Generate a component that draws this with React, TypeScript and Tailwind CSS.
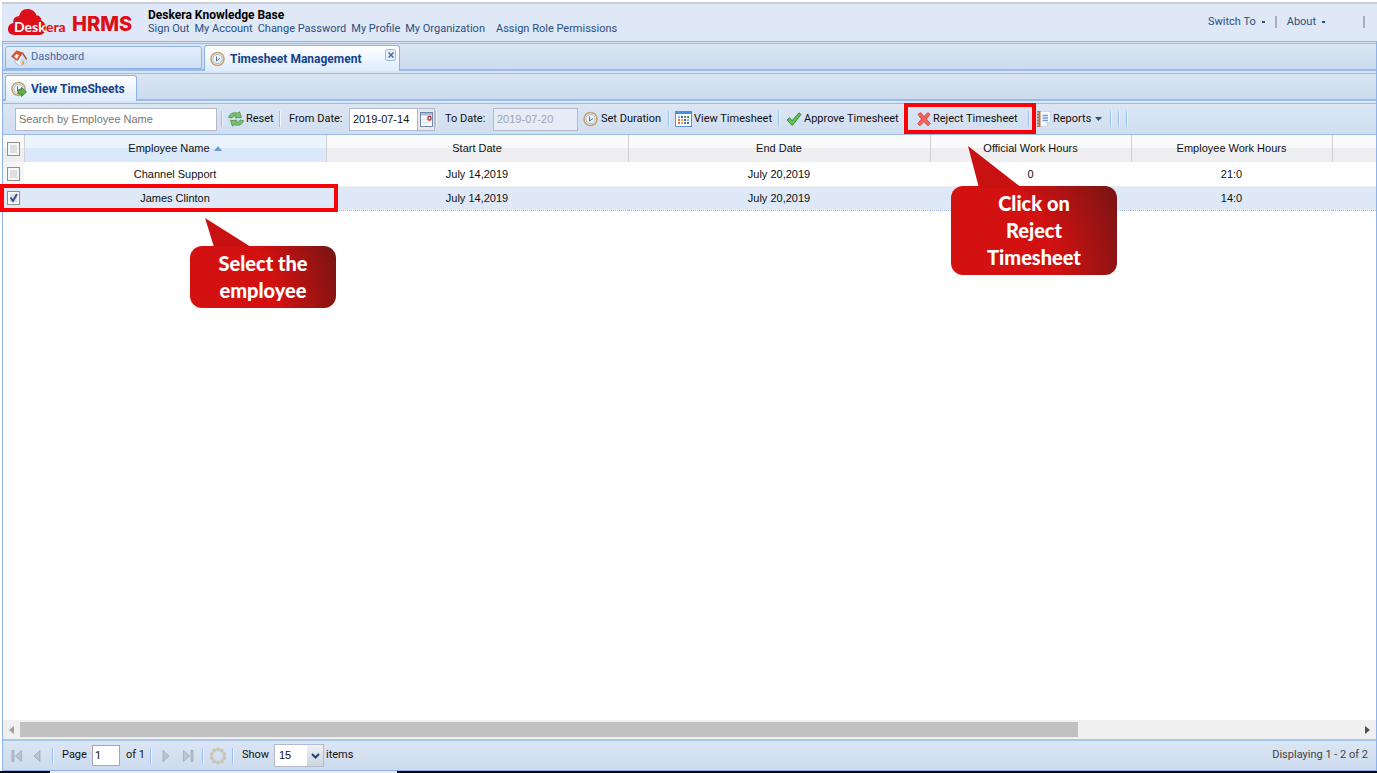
import React, { useState } from "react";

const columns = ["Start Date", "End Date", "Official Work Hours", "Employee Work Hours"];

const timesheets = [
  { name: "Channel Support", start: "July 14,2019", end: "July 20,2019", official: "0", worked: "21:0" },
  { name: "James Clinton", start: "July 14,2019", end: "July 20,2019", official: "", worked: "14:0" },
];

const Logo = () => (
  <svg width="126" height="28" viewBox="0 0 126 28" className="block shrink-0" role="img" aria-label="Deskera HRMS">
    <path
      d="M6.5 27C2.500 27 0 24.700 0 21.300C0 18 2.200 15.300 5.300 15C4.800 11 7.300 8.300 11 8.300C12.200 3.800 15 1 19 1C24 1 27.300 3.500 28.600 7.600C31.500 7.600 33.300 9.700 33.300 12.600C36 13.800 37.800 16.500 37.800 19.500C37.800 24 35 27 31.500 27Z"
      fill="#dc0f18"
    />
    <text x="6" y="24" fontFamily="Lato, sans-serif" fontWeight="700" fontSize="14" fill="#fff">
      Desk
    </text>
    <text x="38" y="24" fontFamily="Lato, sans-serif" fontWeight="700" fontSize="14" fill="#dc0f18">
      era
    </text>
    <text x="64" y="23" fontFamily="Inter, sans-serif" fontWeight="800" fontSize="20" fill="#dc0f18">
      HRMS
    </text>
  </svg>
);

const HomeIcon = () => (
  <svg width="16" height="16" viewBox="0 0 16 16" className="shrink-0">
    <path d="M4 8L10.500 5L15 9.500V13L9 16L4 12.500Z" fill="#f4f7fc" stroke="#8fa3c0" strokeWidth=".7" />
    <path d="M9 10V16L15 13V9.500L11.500 6Z" fill="#cfdcee" />
    <path d="M11 11.500L13 10.500V14L11 15Z" fill="#e9a93c" />
    <path d="M.5 6.500L5.500 .8L11.500 2.800L6.500 10.500Z" fill="#e0562a" stroke="#a53b1c" strokeWidth=".6" />
    <path d="M11.500 2.800L15.700 9.300" stroke="#a53b1c" strokeWidth="1.200" />
    <path d="M3 6.500L5.500 4L8 5L6 9Z" fill="#fbe9de" />
  </svg>
);

const ClockIcon = ({ go = false }: { go?: boolean }) => (
  <svg width="16" height="16" viewBox="0 0 16 16" className="shrink-0">
    <circle cx="7.500" cy="8" r="6.500" fill="#fff" stroke="#c9a36b" strokeWidth="1.600" />
    <circle cx="7.500" cy="8" r="4.700" fill="#eef5fc" stroke="#9fb6d4" strokeWidth="1" />
    <path d="M6.500 5.500V10L10 7.500" fill="none" stroke="#5d6f88" strokeWidth="1" />
    {go && <path d="M7 9H10.500V6.500L15.500 11L10.500 15.500V13H7Z" fill="#62b245" stroke="#34752a" strokeWidth=".8" />}
  </svg>
);

const ResetIcon = () => (
  <svg width="16" height="16" viewBox="0 0 16 16" className="shrink-0">
    <path
      d="M.6 6.500C1.500 2.500 5.500 .8 9.500 2.200L11.500 .8L13.500 6.500L7 6.800L8.500 5.200C6.500 4.500 4.800 5 4 7Z"
      fill="#7cc070"
      stroke="#3c8a3c"
      strokeWidth=".7"
    />
    <path
      d="M15.500 9.500C14.500 13.500 10.500 15.200 6.500 13.800L4.500 15.200L2.500 9.500L9 9.200L7.500 10.800C9.500 11.500 11.200 11 12 9Z"
      fill="#7cc070"
      stroke="#3c8a3c"
      strokeWidth=".7"
    />
  </svg>
);

const GridIcon = () => (
  <svg width="17" height="16" viewBox="0 0 17 16" className="shrink-0">
    <rect x=".5" y=".5" width="16" height="15" fill="#fff" stroke="#5b93da" />
    <rect x="0" y="0" width="17" height="3" fill="#4b8de0" />
    <path d="M3 5h2v2H3zM12 8h2v2h-2z" fill="#7fb4ec" />
    <path d="M6 5h2v2H6zM9 8h2v2H9z" fill="#3566b0" />
    <path d="M9 5h2v2H9zM12 5h2v2h-2z" fill="#4e9a4a" />
    <path d="M3 8h2v2H3zM3 11h2v2H3z" fill="#e4704a" />
    <path d="M6 8h2v2H6zM6 11h2v2H6z" fill="#e8a548" />
    <path d="M9 11h2v2H9zM12 11h2v2h-2z" fill="#3f79c4" />
  </svg>
);

const CheckIcon = () => (
  <svg width="16" height="16" viewBox="0 0 16 16" className="shrink-0">
    <path d="M1 9L3.500 6.800L6 9.800L13 1.800L15 3.500L6.300 14.500Z" fill="#67c052" stroke="#318030" strokeWidth=".9" />
  </svg>
);

const CrossIcon = () => (
  <svg width="14" height="16" viewBox="0 0 14 16" className="shrink-0">
    <path
      d="M1 3.500L3.500 1.500L7 5.500L11 1.500L13 3.500L9.300 8L13.300 12.500L11 14.800L6.800 10.500L3 14.800L.8 12.800L4.500 8Z"
      fill="#f4645a"
      stroke="#d23c38"
      strokeWidth=".8"
    />
  </svg>
);

const ReportIcon = () => (
  <svg width="14" height="16" viewBox="0 0 14 16" className="shrink-0">
    <path d="M2 .5H13.500V11L9.500 15.500H2Z" fill="#f7fafe" stroke="#c5d2e2" strokeWidth=".8" />
    <rect x="0" y="0" width="3.500" height="16" fill="#a9714e" />
    <path d="M0 2h2M0 5h2M0 8h2M0 11h2M0 14h2" stroke="#e6d3c4" />
    <path d="M5.500 4.500H11M5.500 7H11M5.500 9.500H11" stroke="#6d9ce0" strokeWidth="1.300" />
    <path d="M13.500 11H9.500V15.500Z" fill="#cfdbe8" />
  </svg>
);

const CalendarIcon = () => (
  <svg width="13" height="15" viewBox="0 0 13 15">
    <rect x=".5" y=".5" width="12" height="14" fill="#fff" stroke="#7388a8" />
    <rect x="1" y="1" width="11" height="2.500" fill="#a4bce0" />
    <path d="M4 5V13M7 5V13M2 7.500H8M2 10.500H11" stroke="#dde4ee" />
    <rect x="8" y="4.500" width="3" height="3.500" rx="1" fill="#fff" stroke="#b03030" strokeWidth="1.300" />
  </svg>
);

const PageArrow = ({ kind }: { kind: "first" | "prev" | "next" | "last" }) => (
  <svg
    width="12"
    height="14"
    viewBox="0 0 12 14"
    fill="#bcc5cf"
    stroke="#98a3b0"
    strokeWidth=".7"
    className={kind === "next" || kind === "last" ? "rotate-180" : ""}
  >
    <path d={kind === "first" || kind === "last" ? "M10.500 1.500V12.500L4.500 7Z" : "M9 1.500V12.500L3 7Z"} />
    {(kind === "first" || kind === "last") && <rect x="1" y="1.500" width="2" height="11" />}
  </svg>
);

const dots = [0, 36, 72, 108, 144, 180, 216, 252, 288, 324];

const RefreshIcon = () => (
  <svg width="16" height="18" viewBox="0 0 16 18">
    {dots.map(angle => (
      <circle key={angle} cx="8" cy="2.400" r="2" fill="#c8c5b9" transform={`rotate(${angle} 8 9)`} />
    ))}
  </svg>
);

const Divider = ({ className = "" }: { className?: string }) => (
  <span className={`h-4 w-0.5 shrink-0 border-l border-r border-l-[#98c0f4] border-r-[#eef4fc] ${className}`} />
);

const ToolButton = ({ icon, label, className }: { icon: React.ReactNode; label: string; className: string }) => (
  <button className={`flex shrink-0 items-center gap-0.5 whitespace-nowrap ${className}`}>
    {icon}
    {label}
  </button>
);

const CheckBox = ({ label, checked, onChange }: { label: string; checked: boolean; onChange: () => void }) => (
  <label className="relative mx-auto block h-[14px] w-[13px]">
    <input
      type="checkbox"
      aria-label={label}
      checked={checked}
      onChange={onChange}
      className="block h-full w-full appearance-none border border-[#8e8f8f] bg-[#dcdee0] shadow-[inset_0_0_0_2px_#f6f6f6]"
    />
    {checked && (
      <svg viewBox="0 0 13 14" className="pointer-events-none absolute inset-0">
        <path d="M3.500 6.500L6 10L10 3" fill="none" stroke="#3a4f96" strokeWidth="2" />
      </svg>
    )}
  </label>
);

const Header = () => (
  <header className="flex h-[39px] shrink-0 items-start border-t-2 border-[#ccd0d6] bg-[#dfe8f6] pl-1.5 text-[#2a4f80]">
    <div className="mt-1">
      <Logo />
    </div>
    <div className="ml-3.5 mt-1">
      <h1 className="text-[12px] leading-[14px] font-bold text-black">Deskera Knowledge Base</h1>
      <nav className="flex gap-[5px] text-[11px] leading-[14px] whitespace-nowrap">
        <a href="#signout">Sign Out</a>
        <a href="#account">My Account</a>
        <a href="#password">Change Password</a>
        <a href="#profile">My Profile</a>
        <a href="#organization">My Organization</a>
        <a href="#roles" className="ml-1.5">
          Assign Role Permissions
        </a>
      </nav>
    </div>
    <div className="mt-[11px] mr-3 ml-auto flex items-center text-[11px] leading-[14px]">
      <button className="flex items-center gap-1.5">
        Switch To
        <span className="h-0.5 w-[3px] bg-[#2a4f80]" />
      </button>
      <span className="mx-2.5 h-3 w-0.5 bg-[#a9adb5]" />
      <button className="flex items-center gap-1.5">
        About
        <span className="h-0.5 w-[3px] bg-[#2a4f80]" />
      </button>
      <span className="ml-[38px] h-3 w-0.5 bg-[#a9adb5]" />
    </div>
  </header>
);

const Callout = ({ lines, className, tail }: { lines: string[]; className: string; tail: React.ReactNode }) => (
  <div
    className={`absolute z-20 rounded-[12px] bg-[radial-gradient(circle_at_0%_100%,#d41111_55%,#761414_100%)] text-center font-['Lato',sans-serif] text-[20px] leading-[27px] font-black text-white ${className}`}
  >
    {tail}
    {lines.map(line => (
      <div key={line}>{line}</div>
    ))}
  </div>
);

const App = () => {
  const [selected, setSelected] = useState<string[]>(["James Clinton"]);

  const toggle = (name: string) =>
    setSelected(selected.includes(name) ? selected.filter(item => item !== name) : [...selected, name]);

  return (
    <div className="flex h-screen flex-col overflow-hidden bg-white pt-0.5 font-['Roboto',sans-serif] text-[11px] text-[#111]">
      <div className="ml-0.5 flex min-h-0 flex-1 flex-col">
        <Header />
        <main className="flex min-h-0 flex-1 flex-col border border-[#8db2e3] bg-[#d9e6f6]">
          <div className="mt-px flex h-[28px] shrink-0 items-end border-t border-b-2 border-[#99bbe8] bg-linear-to-b from-[#dbe6f4] to-[#cbdaed] pl-0.5">
            <button className="flex h-[23px] w-[197px] items-center gap-1 rounded-t-[3px] border border-[#8db2e3] bg-linear-to-b from-[#e4eefb] to-[#cfdff5] pl-[5px] text-[11px] text-[#416aa3]">
              <HomeIcon />
              Dashboard
            </button>
            <div className="relative ml-0.5 -mb-0.5 flex h-[26px] w-[196px] items-center gap-1 rounded-t-[3px] border border-b-0 border-[#8db2e3] bg-linear-to-b from-white to-[#deecfd] pl-[5px] text-[12px] font-bold text-[#15428b]">
              <ClockIcon />
              Timesheet Management
              <button
                aria-label="Close Timesheet Management"
                className="absolute top-[3px] right-[3px] flex h-[12px] w-[11px] items-center justify-center rounded-xs border border-[#9dbce3] bg-[#e6f0fc]"
              >
                <svg width="6" height="6" viewBox="0 0 6 6">
                  <path d="M.5.5L5.500 5.500M5.500.5L.5 5.500" stroke="#4a6c9c" strokeWidth="1.500" />
                </svg>
              </button>
            </div>
          </div>

          <div className="mt-0.5 flex h-[28px] shrink-0 items-end border-t border-b-2 border-[#99bbe8] bg-linear-to-b from-[#dbe6f4] to-[#cbdaed] pl-0.5">
            <button className="-mb-0.5 flex h-[26px] w-[132px] items-center gap-1 rounded-t-[3px] border border-b-0 border-[#8db2e3] bg-linear-to-b from-white to-[#deecfd] pl-[5px] text-[12px] font-bold whitespace-nowrap text-[#15428b]">
              <ClockIcon go />
              View TimeSheets
            </button>
          </div>

          <div className="mt-0.5 flex h-[32px] shrink-0 items-center border-t border-b border-[#99bbe8] bg-linear-to-b from-[#dbe6f4] to-[#d0def0]">
            <input
              aria-label="Search by Employee Name"
              placeholder="Search by Employee Name"
              className="ml-3 h-[23px] w-[202px] shrink-0 border border-[#b5b8c8] bg-white px-[3px] font-['Liberation_Sans',sans-serif] text-[11px] placeholder:text-[#777]"
            />
            <Divider className="ml-1" />
            <ToolButton icon={<ResetIcon />} label="Reset" className="ml-[5px] w-[46px]" />
            <Divider className="ml-[5px]" />
            <label htmlFor="from" className="ml-2 w-[56px] shrink-0 whitespace-nowrap">
              From Date:
            </label>
            <input
              id="from"
              defaultValue="2019-07-14"
              className="ml-1 h-[23px] w-[69px] shrink-0 border border-[#b5b8c8] bg-white px-[3px] font-['Liberation_Sans',sans-serif] text-[11px]"
            />
            <button
              aria-label="Pick a date"
              className="flex h-[23px] w-[17px] shrink-0 items-center justify-center border border-l-0 border-[#b5b8c8] bg-[#e6e8ec]"
            >
              <CalendarIcon />
            </button>
            <Divider />
            <label htmlFor="to" className="ml-2 w-11 shrink-0 whitespace-nowrap">
              To Date:
            </label>
            <input
              id="to"
              disabled
              defaultValue="2019-07-20"
              className="ml-1 h-[23px] w-[85px] shrink-0 border border-[#b5b8c8] bg-[#e6edf7] px-[3px] font-['Liberation_Sans',sans-serif] text-[11px] text-[#a0a4ab]"
            />
            <ToolButton icon={<ClockIcon />} label="Set Duration" className="ml-[5px] w-[79px]" />
            <Divider className="ml-1.5" />
            <ToolButton icon={<GridIcon />} label="View Timesheet" className="ml-[5px] w-[97px]" />
            <Divider className="ml-1.5" />
            <ToolButton icon={<CheckIcon />} label="Approve Timesheet" className="ml-1.5 w-[113px]" />
            <div className="relative ml-[18px] shrink-0">
              <ToolButton icon={<CrossIcon />} label="Reject Timesheet" className="w-[102px]" />
              <div className="pointer-events-none absolute -top-2 -left-[13px] z-10 h-[31px] w-[132px] border-4 border-[#fb0007]" />
              <Callout
                lines={["Click on", "Reject", "Timesheet"]}
                className="top-[75px] left-[34px] w-[166px] py-1"
                tail={
                  <svg width="54" height="42" viewBox="0 0 54 42" className="absolute -top-[40px] left-[17px]">
                    <path d="M0 0L11 42H54Z" fill="#c91111" />
                  </svg>
                }
              />
            </div>
            <Divider className="ml-[9px]" />
            <button className="ml-[7px] flex shrink-0 items-center gap-0.5">
              <ReportIcon />
              Reports
              <svg width="7" height="4" viewBox="0 0 7 4" className="ml-0.5">
                <path d="M0 0H7L3.500 4Z" fill="#30507c" />
              </svg>
            </button>
            <Divider className="ml-2" />
            <Divider className="ml-1.5" />
            <Divider className="ml-1.5" />
          </div>

          <div className="relative min-h-0 flex-1 bg-white font-['Liberation_Sans',sans-serif]">
            <table className="w-full table-fixed border-collapse text-center">
              <colgroup>
                <col className="w-[21px]" />
                <col className="w-[302px]" />
                <col className="w-[302px]" />
                <col className="w-[302px]" />
                <col className="w-[201px]" />
                <col className="w-[201px]" />
                <col />
              </colgroup>
              <thead>
                <tr className="h-[27px] bg-linear-to-b from-[#fafafa] from-50% to-[#eeeef0] to-50% [&>th]:border-r [&>th]:border-[#d0d0d0] [&>th]:p-0 [&>th]:font-normal">
                  <th>
                    <CheckBox
                      label="Select all"
                      checked={selected.length === timesheets.length}
                      onChange={() =>
                        setSelected(selected.length === timesheets.length ? [] : timesheets.map(row => row.name))
                      }
                    />
                  </th>
                  <th className="bg-linear-to-b from-[#ebf3fd] from-50% to-[#d9e8fb] to-50%">
                    <button className="inline-flex items-center gap-1">
                      Employee Name
                      <svg width="8" height="5" viewBox="0 0 8 5">
                        <path d="M0 5L4 0L8 5Z" fill="#6e9ad4" />
                      </svg>
                    </button>
                  </th>
                  {columns.map(column => (
                    <th key={column}>{column}</th>
                  ))}
                  <th className="border-r-0!" />
                </tr>
              </thead>
              <tbody>
                {timesheets.map(row => {
                  const isSelected = selected.includes(row.name);
                  return (
                    <tr
                      key={row.name}
                      className={`h-[24px] [&>td]:p-0 ${isSelected ? "border-y border-dotted border-[#a3bae9] bg-[#dfe8f6]" : "border-b border-[#ededed]"}`}
                    >
                      <td className={isSelected ? "" : "bg-[#f6f6f6]"}>
                        <CheckBox label={`Select ${row.name}`} checked={isSelected} onChange={() => toggle(row.name)} />
                      </td>
                      <td>{row.name}</td>
                      <td>{row.start}</td>
                      <td>{row.end}</td>
                      <td>{row.official}</td>
                      <td>{row.worked}</td>
                      <td />
                    </tr>
                  );
                })}
              </tbody>
            </table>

            <div className="pointer-events-none absolute top-[49px] -left-[3px] z-10 h-[28px] w-[338px] border-4 border-[#fb0007]" />
            <Callout
              lines={["Select the", "employee"]}
              className="top-[111px] left-[187px] w-[146px] py-1"
              tail={
                <svg width="46" height="29" viewBox="0 0 46 29" className="absolute -top-[28px] left-[15px]">
                  <path d="M0 0L9 29H46Z" fill="#c91111" />
                </svg>
              }
            />
          </div>

          <div className="flex h-[19px] shrink-0 items-center bg-[#f0f0f0]">
            <button aria-label="Scroll left" className="flex w-[17px] justify-center">
              <svg width="5" height="8" viewBox="0 0 5 8">
                <path d="M5 0V8L0 4Z" fill="#a0a0a0" />
              </svg>
            </button>
            <div className="flex-1">
              <div className="h-[15px] w-[79%] bg-[#c1c1c1]" />
            </div>
            <button aria-label="Scroll right" className="flex w-[17px] justify-center">
              <svg width="5" height="8" viewBox="0 0 5 8">
                <path d="M0 0V8L5 4Z" fill="#505050" />
              </svg>
            </button>
          </div>

          <footer className="flex h-[31px] shrink-0 items-center border-t-2 border-[#a9c6ec] bg-linear-to-b from-[#dbe6f4] to-[#ccdbee] pr-2">
            <button aria-label="First page" className="ml-2">
              <PageArrow kind="first" />
            </button>
            <button aria-label="Previous page" className="ml-2">
              <PageArrow kind="prev" />
            </button>
            <Divider className="ml-[9px]" />
            <label htmlFor="page" className="ml-2 w-[26px]">
              Page
            </label>
            <input
              id="page"
              defaultValue="1"
              className="ml-1 h-[21px] w-[28px] border border-[#a5a8b4] bg-white px-0.5 text-[11px]"
            />
            <span className="ml-1.5 w-5 whitespace-nowrap">of 1</span>
            <Divider className="ml-1" />
            <button aria-label="Next page" className="ml-2">
              <PageArrow kind="next" />
            </button>
            <button aria-label="Last page" className="ml-2.5">
              <PageArrow kind="last" />
            </button>
            <Divider className="ml-2" />
            <button aria-label="Refresh" className="ml-1.5">
              <RefreshIcon />
            </button>
            <Divider className="ml-1.5" />
            <label htmlFor="size" className="ml-2 w-[28px]">
              Show
            </label>
            <div className="relative ml-1 flex h-[23px] w-[50px] border border-[#b5b8c8]">
              <select
                id="size"
                defaultValue="15"
                className="w-full appearance-none bg-white pl-1 font-['Liberation_Sans',sans-serif] text-[11px]"
              >
                <option>15</option>
                <option>30</option>
              </select>
              <span className="pointer-events-none absolute inset-y-0 right-0 flex w-4 items-center justify-center bg-linear-to-b from-[#eef1f6] to-[#cdd5e2]">
                <svg width="9" height="6" viewBox="0 0 9 6">
                  <path d="M1 1L4.500 4.500L8 1" fill="none" stroke="#26407c" strokeWidth="2" />
                </svg>
              </span>
            </div>
            <span className="ml-0.5">items</span>
            <span className="ml-auto text-[#444]">Displaying 1 - 2 of 2</span>
          </footer>
        </main>
      </div>
      <div className="flex h-0.5 shrink-0 bg-[#0a0a0c]">
        <div className="ml-[50px] w-[347px] bg-[#ececec]" />
      </div>
    </div>
  );
};

export default App;
